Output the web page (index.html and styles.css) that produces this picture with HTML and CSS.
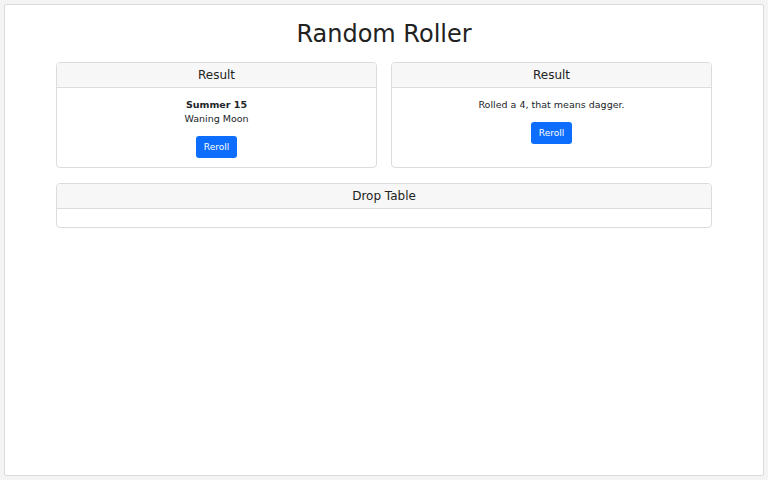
FILE: index.html
```html
<!DOCTYPE html>
<html>
<head>
<meta charset="utf-8">
<link rel="stylesheet" href="styles.css">
</head>
<body>
<div class="page">
  <h1 class="title">Random Roller</h1>
  <div class="container">
    <div class="row">
      <div class="card">
        <div class="card-header">Result</div>
        <div class="card-body">
          <p class="line bold">Summer 15</p>
          <p class="line">Waning Moon</p>
          <button class="btn">Reroll</button>
        </div>
      </div>
      <div class="card">
        <div class="card-header">Result</div>
        <div class="card-body">
          <p class="line">Rolled a 4, that means dagger.</p>
          <button class="btn">Reroll</button>
        </div>
      </div>
    </div>
    <div class="card">
      <div class="card-header">Drop Table</div>
      <div class="card-body empty"></div>
    </div>
  </div>
</div>
</body>
</html>
```
FILE: styles.css
```css
html, body {
  margin: 0;
  padding: 0;
  height: 100%;
}
body {
  background: #f4f4f4;
  font-family: "DejaVu Sans", sans-serif;
  color: #212529;
  padding: 4px;
  box-sizing: border-box;
}
.page {
  background: #fff;
  border: 1px solid #dcdcdc;
  height: 100%;
  box-sizing: border-box;
  border-radius: 2px;
}
.title {
  margin: 0;
  padding-top: 14px;
  font-size: 24px;
  line-height: 31px;
  font-weight: 400;
  text-align: center;
  color: #222;
}
.container {
  width: 656px;
  margin: 12px auto 0;
  display: flex;
  flex-direction: column;
  gap: 15px;
}
.row {
  display: grid;
  grid-template-columns: 1fr 1fr;
  gap: 14px;
}
.card {
  border: 1px solid #dcdcdc;
  border-radius: 4px;
  overflow: hidden;
  background: #fff;
}
.card-header {
  background: #f7f7f7;
  border-bottom: 1px solid #dcdcdc;
  text-align: center;
  font-size: 12px;
  line-height: 24px;
  color: #222;
}
.card-body {
  padding: 10px 10px 9px;
  text-align: center;
  font-size: 9.5px;
}
.card-body.empty {
  padding: 0;
  height: 18px;
}
.line {
  margin: 0;
  line-height: 14px;
}
.bold {
  font-weight: 700;
}
.btn {
  margin-top: 10px;
  font-family: "DejaVu Sans", sans-serif;
  font-size: 9px;
  color: #fff;
  background: #0d6efd;
  border: none;
  border-radius: 3px;
  height: 22px;
  padding: 0 8px;
  cursor: pointer;
}
```
